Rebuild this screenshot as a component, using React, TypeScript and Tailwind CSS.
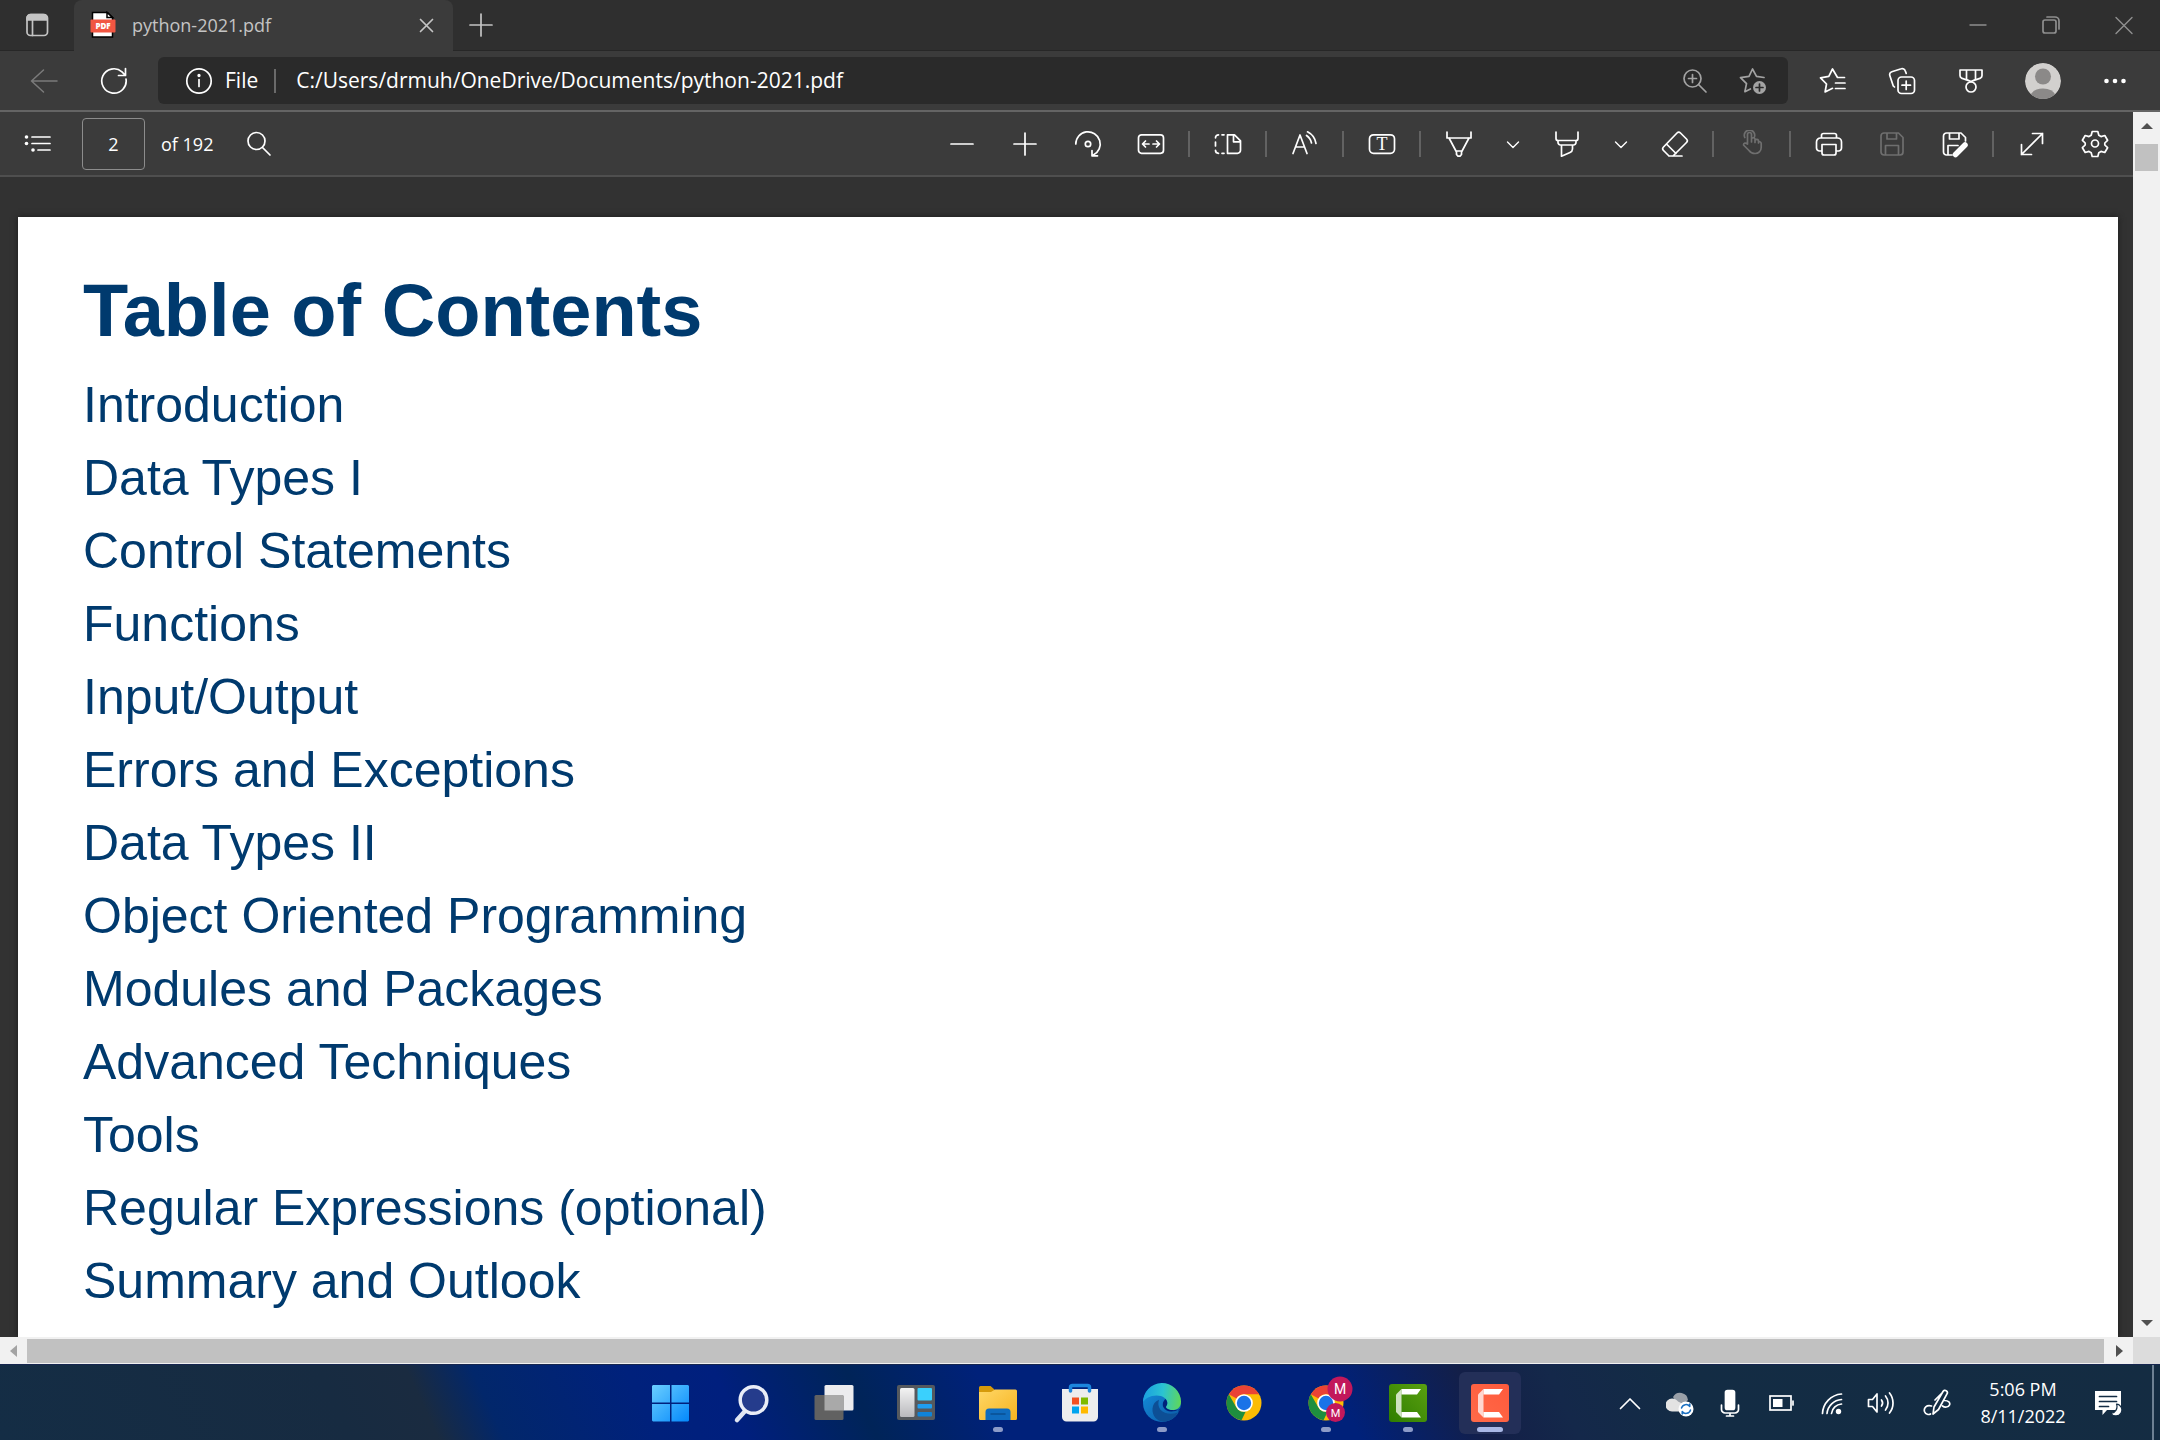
import clsx from "clsx";
import React from "react";

type IconProps = { children: React.ReactNode; className?: string };

// Line icons, all drawn on the same 28px grid
function Icon({ children, className }: IconProps) {
   return (
      <svg
         viewBox="0 0 28 28"
         fill="none"
         stroke="currentColor"
         strokeWidth={1.7}
         strokeLinecap="round"
         strokeLinejoin="round"
         aria-hidden="true"
         className={clsx("size-7 shrink-0", className)}
      >
         {children}
      </svg>
   );
}

// Coloured app logos on a 40px grid
function Logo({ children }: { children: React.ReactNode }) {
   return (
      <svg viewBox="0 0 40 40" aria-hidden="true" className="size-10 shrink-0 overflow-visible">
         {children}
      </svg>
   );
}

type ButtonProps = { label: string; className?: string; disabled?: boolean; children: React.ReactNode };

function IconButton({ label, className, disabled, children }: ButtonProps) {
   return (
      <button
         type="button"
         aria-label={label}
         disabled={disabled}
         className={clsx("flex h-12 shrink-0 items-center justify-center", className)}
      >
         {children}
      </button>
   );
}

/* ---------- Title bar ---------- */

function TitleBar() {
   return (
      <header className="flex h-[51px] shrink-0 items-stretch bg-[#2f2f2f] text-[#c4c4c4]">
         <div className="flex w-[74px] items-center justify-center border-b border-[#272727]">
            <IconButton label="Tab actions menu">
               <Icon>
                  <path d="M4 7.5a4 4 0 0 1 4-4h12a4 4 0 0 1 4 4V9H4z" fill="currentColor" />
                  <rect x="4" y="3.5" width="20.5" height="21" rx="3.5" />
                  <path d="M9.5 9v15.5" />
               </Icon>
            </IconButton>
         </div>
         <div className="flex w-[379px] items-center rounded-t-lg bg-[#3b3b3b] pr-2.5 pb-px pl-4">
            <svg viewBox="0 0 26 28" aria-hidden="true" className="h-7 w-[26px]">
               <path d="M2.5 1.5h15l5 5v19.5h-20z" fill="#fff" stroke="#000" strokeWidth="1.5" />
               <path d="M17 1.5v5h5.5z" fill="#fff" stroke="#000" strokeWidth="1.5" />
               <rect x="0.5" y="8.5" width="25" height="13" rx="1" fill="#f15642" />
               <text x="13" y="18" textAnchor="middle" fontSize="8" fontWeight="800" fill="#fff" fontFamily="Open Sans, sans-serif">
                  PDF
               </text>
            </svg>
            <span className="ml-4 flex-1 truncate text-lg">python-2021.pdf</span>
            <IconButton label="Close tab" className="w-8">
               <Icon>
                  <path d="M7.5 8.5l12 12M19.5 8.5l-12 12" />
               </Icon>
            </IconButton>
         </div>
         <div className="flex flex-1 items-center border-b border-[#272727]">
            <IconButton label="New tab" className="w-14">
               <Icon>
                  <path d="M14 3v22M3 14h22" />
               </Icon>
            </IconButton>
            <div className="ml-auto flex text-[#8f8f8f]">
               <IconButton label="Minimize" className="w-[72px]">
                  <Icon>
                     <path d="M6 14h16" strokeWidth={1.4} />
                  </Icon>
               </IconButton>
               <IconButton label="Restore" className="w-[74px]">
                  <Icon>
                     <rect x="6" y="9" width="13" height="13" rx="2" />
                     <path d="M10 6h8a4 4 0 0 1 4 4v8" />
                  </Icon>
               </IconButton>
               <IconButton label="Close" className="w-[72px]">
                  <Icon>
                     <path d="M6 6.5l16 16M22 6.5l-16 16" strokeWidth={1.4} />
                  </Icon>
               </IconButton>
            </div>
         </div>
      </header>
   );
}

/* ---------- Address bar ---------- */

function AddressBar() {
   return (
      <div className="flex h-[61px] shrink-0 items-center border-b-2 border-[#646464] bg-[#3b3b3b] text-white">
         <div className="flex w-[158px] items-center pl-[9px]">
            <IconButton label="Back" className="w-[70px] text-[#7b7b7b]" disabled>
               <Icon>
                  <path d="M27 14H1.5M13.5 3L1.5 14l12 11" strokeWidth={1.5} />
               </Icon>
            </IconButton>
            <IconButton label="Refresh" className="w-[70px]">
               <Icon>
                  <path d="M26 12A12.200 12.200 0 1 1 22 4.800l3 3.200M25.500 1.500V8.500h-7" />
               </Icon>
            </IconButton>
         </div>
         <div className="flex h-[47px] flex-1 items-center rounded-md bg-[#2a2a2a] pr-1.5 pl-[27px]">
            <Icon>
               <circle cx="14" cy="14" r="12.2" />
               <path d="M14 12.500v7" />
               <circle cx="14" cy="8.500" r="0.8" fill="currentColor" />
            </Icon>
            <span className="ml-3 text-[21px]">File</span>
            <span className="ml-4 h-6 w-0.5 bg-[#6a6a6a]" />
            <input
               aria-label="Address"
               defaultValue="C:/Users/drmuh/OneDrive/Documents/python-2021.pdf"
               className="ml-5 flex-1 bg-transparent text-[21px] outline-none"
            />
            <IconButton label="Zoom" className="w-[58px] text-[#a3a3a3]">
               <Icon>
                  <circle cx="11.5" cy="11.5" r="8.5" />
                  <path d="M17.5 17.5l7.5 7.5M11.5 7.5v8M7.5 11.5h8" />
               </Icon>
            </IconButton>
            <IconButton label="Add to favorites" className="w-[58px] text-[#a3a3a3]">
               <Icon>
                  <path d="M25 10.5l-7.500-1.200L13.500 2 10 9.300l-8.500 1.400 6 6-1.600 8 5.500-2.700" />
                  <circle cx="20.5" cy="20.5" r="6.5" fill="currentColor" stroke="none" />
                  <path d="M20.5 17v7M17 20.5h7" stroke="#2a2a2a" />
               </Icon>
            </IconButton>
         </div>
         <div className="flex items-center pr-2.5 pl-2.5">
            <IconButton label="Favorites" className="w-[69px]">
               <Icon>
                  <path d="M25.5 10.5h-7L13.500 2 9.800 9.400l-8.300 1.400 6 6.200-1.400 8 7.400-3.700M16.500 16h9.500M16.500 21.500h9.500" />
               </Icon>
            </IconButton>
            <IconButton label="Collections" className="w-[69px]">
               <Icon>
                  <rect x="10" y="10" width="16.5" height="16.5" rx="3.5" />
                  <path d="M18.200 14v8.500M14 18.200h8.500M6.500 20l-1.300-1.200L1.800 8.500a3 3 0 0 1 2-3.800l9.500-2.900a3 3 0 0 1 3.900 2l1 2.600" />
               </Icon>
            </IconButton>
            <IconButton label="Microsoft Rewards" className="w-[70px]">
               <Icon>
                  <path d="M3 3h22v5.500a3 3 0 0 1-1.500 2.600L14 14.500l-9.500-3.400A3 3 0 0 1 3 8.500zM9.500 3v9.500L14 14.500l4.500-2V3" />
                  <circle cx="14" cy="20" r="5" />
               </Icon>
            </IconButton>
            <IconButton label="Profile" className="w-[74px]">
               <svg viewBox="0 0 36 36" aria-hidden="true" className="size-9 rounded-full">
                  <circle cx="18" cy="18" r="18" fill="#d2d0ce" />
                  <circle cx="18" cy="13.5" r="8" fill="#8b8988" />
                  <path d="M5 32.500a14 11 0 0 1 26 0L26 36H10z" fill="#8b8988" />
               </svg>
            </IconButton>
            <IconButton label="Settings and more" className="w-[70px]">
               <Icon>
                  <g fill="currentColor" stroke="none">
                     <circle cx="5.5" cy="14" r="2.3" />
                     <circle cx="14" cy="14" r="2.3" />
                     <circle cx="22.5" cy="14" r="2.3" />
                  </g>
               </Icon>
            </IconButton>
         </div>
      </div>
   );
}

/* ---------- PDF toolbar ---------- */

type Tool = { label: string; icon?: React.ReactNode; kind?: "divider" | "menu"; disabled?: boolean };

const divider: Tool = { label: "", kind: "divider" };

const floppy = <path d="M22 25H6a3 3 0 0 1-3-3V6a3 3 0 0 1 3-3h14.500L25 7.500V22a3 3 0 0 1-3 3zM9 3v6h9.500V3M7.500 25V15.500h13V25" />;

const tools: Tool[] = [
   { label: "Zoom out", icon: <path d="M3 14h22" /> },
   { label: "Zoom in", icon: <path d="M14 3v22M3 14h22" /> },
   {
      label: "Rotate",
      icon: (
         <>
            <path d="M1.800 14a12.200 12.200 0 1 1 17.500 11M18 20.500v5.300h5.500" />
            <circle cx="14" cy="14" r="2.7" />
         </>
      ),
   },
   {
      label: "Fit to width",
      icon: (
         <>
            <rect x="1.5" y="4.8" width="25" height="18.5" rx="3" />
            <path d="M12 14H6M8.500 11L5.500 14l3 3M16 14h6M19.500 11l3 3-3 3" />
         </>
      ),
   },
   divider,
   {
      label: "Page view",
      icon: (
         <path d="M13.500 4.800h7l6 6v9.500a3 3 0 0 1-3 3h-10zM19.500 4.800v7h7M10 4.800H8M4.500 4.800a3 3 0 0 0-3 3M1.500 12v4M1.500 20.300a3 3 0 0 0 3 3M8 23.300h2" />
      ),
   },
   divider,
   { label: "Read aloud", icon: <path d="M2 23.500L9 5l7 18.500M4.500 17h9M15.500 5.500a12 12 0 0 1 5 7.500M16.500 1.800A16 16 0 0 1 25 13.500" /> },
   divider,
   {
      label: "Add text",
      icon: (
         <>
            <rect x="1.5" y="4.8" width="25" height="18.5" rx="4" />
            <text x="14" y="20" textAnchor="middle" fontSize="18" fill="currentColor" stroke="none" fontFamily="Liberation Serif, serif">
               T
            </text>
         </>
      ),
   },
   divider,
   { label: "Draw", icon: <path d="M2 2v6h24V2M4 8l7.500 14M24 8l-7.500 14M11.500 21h5v3.500l-1.500 1.700h-2l-1.500-1.700z" /> },
   { label: "Draw options", kind: "menu" },
   { label: "Highlight", icon: <path d="M3 2v6.500a2 2 0 0 0 2 2h18a2 2 0 0 0 2-2V2M5 10.500v1.800A2.500 2.500 0 0 0 7.500 15h13a2.500 2.500 0 0 0 2.500-2.700v-1.800M8.500 15v11.200l8.500-3.700a4 4 0 0 0 2.500-3.500V15" /> },
   { label: "Highlight options", kind: "menu" },
   { label: "Erase", icon: <path d="M8 26L2.500 20.500a2.500 2.500 0 0 1 0-3.500L16 3a2.500 2.500 0 0 1 3.500 0l6 6a2.500 2.500 0 0 1 0 3.500L12 26M8 26h13M5.500 14l9.500 9.500" /> },
   divider,
   {
      label: "Touch",
      disabled: true,
      icon: (
         <path d="M9.500 14V4.500a2 2 0 0 1 4 0v7.500M13.500 12V8.800a2 2 0 0 1 3.500 0V12.500M17 10.500a2 2 0 0 1 3.500 0v2.500M20.500 12a1.800 1.800 0 0 1 2.700 1.500v4a6 6 0 0 1-6.200 6c-3 0-4.500-.8-6-3l-5.500-5.500c0-2 2-2.500 4-1M6.800 7.500a5.200 5.200 0 1 1 9.400 0" />
      ),
   },
   divider,
   { label: "Print", icon: <path d="M7 21H4.500a3 3 0 0 1-3-3v-6a4 4 0 0 1 4-4h17a4 4 0 0 1 4 4v6a3 3 0 0 1-3 3H21M6.500 8V5.500a2 2 0 0 1 2-2h11a2 2 0 0 1 2 2V8M7 14.500h14V23a2 2 0 0 1-2 2H9a2 2 0 0 1-2-2z" /> },
   { label: "Save", disabled: true, icon: floppy },
   {
      label: "Save as",
      icon: (
         <>
            <path d="M11 25H5.500A3 3 0 0 1 2.500 22V6a3 3 0 0 1 3-3H20l4.500 4.500V11M8.500 3v6H18V3M7 25V15.500h10" />
            <path d="M14.500 24.500L24 15" strokeWidth="5.5" />
         </>
      ),
   },
   divider,
   { label: "Full screen", icon: <path d="M3.500 24.500l21-21M14.500 3.500h10v10M3.500 14.500v10h10" strokeLinejoin="miter" /> },
   {
      label: "PDF settings",
      icon: (
         <>
            <circle cx="14" cy="13.5" r="3.5" />
            <path d="M11.200 1.500h5.600l1 3.800 2.200 1.300 3.800-1.100 2.800 4.800-2.800 2.700v2l2.800 2.700-2.800 4.800-3.800-1.100-2.200 1.300-1 3.800h-5.600l-1-3.800L8 21.400l-3.800 1.100-2.800-4.800L4.200 15v-2l-2.800-2.700 2.800-4.800L8 6.600l2.200-1.300z" />
         </>
      ),
   },
];

function PdfToolbar() {
   return (
      <div className="flex h-[65px] shrink-0 items-center border-b-2 border-[#4f4f4f] bg-[#3b3b3b] pr-[7px] text-lg text-white">
         <IconButton label="Contents" className="w-[82px] pr-1.5">
            <Icon>
               <path d="M8 7h18M8 13.500h18M14 20h12" />
               <g fill="currentColor" stroke="none">
                  <circle cx="2.5" cy="7" r="1.8" />
                  <circle cx="2.5" cy="13.5" r="1.8" />
                  <circle cx="9" cy="20" r="1.8" />
               </g>
            </Icon>
         </IconButton>
         <input
            aria-label="Page number"
            defaultValue="2"
            className="h-[52px] w-[63px] rounded-sm border border-[#8c8c8c] bg-transparent text-center outline-none"
         />
         <span className="ml-4">of 192</span>
         <IconButton label="Find" className="ml-4 w-[60px]">
            <Icon>
               <circle cx="11.5" cy="11" r="8.5" />
               <path d="M17.500 17.500l7.500 7.500" />
            </Icon>
         </IconButton>
         <div role="toolbar" aria-label="PDF tools" className="ml-auto flex items-center">
            {tools.map((tool, i) =>
               tool.kind === "divider" ? (
                  <span key={i} className="mx-1.5 h-[26px] w-0.5 bg-[#626262]" />
               ) : tool.kind === "menu" ? (
                  <IconButton key={i} label={tool.label} className="w-[45px]">
                     <Icon>
                        <path d="M8.500 12l5.500 5.500 5.500-5.500" strokeWidth={1.4} />
                     </Icon>
                  </IconButton>
               ) : (
                  <IconButton
                     key={i}
                     label={tool.label}
                     disabled={tool.disabled}
                     className={clsx("w-[63px]", tool.disabled && "text-[#6f6f6f]")}
                  >
                     <Icon>{tool.icon}</Icon>
                  </IconButton>
               )
            )}
         </div>
      </div>
   );
}

/* ---------- Document ---------- */

const chapters = [
   "Introduction",
   "Data Types I",
   "Control Statements",
   "Functions",
   "Input/Output",
   "Errors and Exceptions",
   "Data Types II",
   "Object Oriented Programming",
   "Modules and Packages",
   "Advanced Techniques",
   "Tools",
   "Regular Expressions (optional)",
   "Summary and Outlook",
];

function DocumentPage() {
   return (
      <main className="min-h-0 flex-1 overflow-hidden bg-[#323232] px-[18px] pt-10 pr-[15px]">
         <article className="h-full bg-white px-[65px] pt-14 font-['Liberation_Sans',Arial,sans-serif] text-[#003a6e] shadow-[0_0_6px_#1c1c1c]">
            <h1 className="text-[74px] leading-[76px] font-bold">Table of Contents</h1>
            <ol className="mt-5 text-[50px] leading-[73px]">
               {chapters.map((chapter) => (
                  <li key={chapter}>
                     <a href="#">{chapter}</a>
                  </li>
               ))}
            </ol>
         </article>
      </main>
   );
}

function VerticalScrollbar() {
   return (
      <div className="flex w-[27px] shrink-0 flex-col items-center bg-[#f1f1f1]">
         <svg viewBox="0 0 12 6" aria-hidden="true" className="mt-[11px] h-1.5 w-3">
            <path d="M0 6l6-6 6 6z" fill="#505050" />
         </svg>
         <div className="mt-[15px] h-[27px] w-[23px] bg-[#c1c1c1]" />
         <svg viewBox="0 0 12 6" aria-hidden="true" className="mt-auto mb-[11px] h-1.5 w-3">
            <path d="M0 0l6 6 6-6z" fill="#505050" />
         </svg>
      </div>
   );
}

function HorizontalScrollbar() {
   return (
      <div className="flex h-[27px] shrink-0">
         <div className="flex flex-1 items-center bg-[#f1f1f1]">
            <svg viewBox="0 0 7 12" aria-hidden="true" className="mx-2.5 h-3 w-[7px]">
               <path d="M7 0v12L0 6z" fill="#a3a3a3" />
            </svg>
            <div className="h-6 flex-1 bg-[#c1c1c1]" />
            <svg viewBox="0 0 7 12" aria-hidden="true" className="mr-2.5 ml-3 h-3 w-[7px]">
               <path d="M0 0v12l7-6z" fill="#505050" />
            </svg>
         </div>
         <div className="w-[27px] bg-[#dcdcdc]" />
      </div>
   );
}

/* ---------- Taskbar ---------- */

function ChromeShapes() {
   return (
      <>
         <circle cx="20" cy="20" r="17.5" fill="#fbbc04" />
         <path d="M4.800 11.300A17.500 17.500 0 0 1 35.200 11.300H20a8.700 8.700 0 0 0-7.500 4.300z" fill="#ea4335" />
         <path d="M4.800 11.300L12.400 24.500a8.700 8.700 0 0 0 9.300 4L17.500 37.300A17.500 17.500 0 0 1 4.800 11.300z" fill="#1e8e3e" />
         <circle cx="20" cy="20" r="8.8" fill="#fff" />
         <circle cx="20" cy="20" r="7.2" fill="#1a73e8" />
      </>
   );
}

function Camtasia({ from, to }: { from: string; to: string }) {
   const id = `camtasia-${from.slice(1)}`;
   return (
      <>
         <linearGradient id={id} x1="1" y1="0" x2="0" y2="1">
            <stop stopColor={from} />
            <stop offset="1" stopColor={to} />
         </linearGradient>
         <rect x="1" y="1" width="38" height="38" rx="3" fill={`url(#${id})`} />
         <path d="M13.500 6H33l-4 5.500H13.500zM13.500 29H29l4 5.500H13.500z" fill="#fff" />
         <path d="M8 11.500L13.500 6v28.500L8 29z" fill="#fff" fillOpacity="0.75" />
      </>
   );
}

type App = { name: string; logo: React.ReactNode; running?: boolean; active?: boolean };

const apps: App[] = [
   {
      name: "Start",
      logo: (
         <>
            <linearGradient id="start" x1="0" y1="0" x2="40" y2="40" gradientUnits="userSpaceOnUse">
               <stop stopColor="#70d2ff" />
               <stop offset="1" stopColor="#0086fc" />
            </linearGradient>
            <path d="M3 2h17v17.500H2V3zM21.500 2H38l1 1v16.500H21.500zM2 21h18v17.500H3l-1-1zM21.500 21H39v16.500l-1 1H21.500z" fill="url(#start)" />
         </>
      ),
   },
   {
      name: "Search",
      logo: (
         <>
            <path d="M14 27l-9 10" stroke="#dfe5f2" strokeWidth="4.5" strokeLinecap="round" />
            <circle cx="21.5" cy="17" r="13.3" fill="#253c8c" stroke="#e9edf7" strokeWidth="3.5" />
         </>
      ),
   },
   {
      name: "Task View",
      logo: (
         <>
            <rect x="10.5" y="2" width="29" height="25.5" rx="1.5" fill="#ececee" />
            <rect x="0.5" y="12" width="29" height="25" rx="1.5" fill="#616161" />
            <path d="M10.500 12h18a1 1 0 0 1 1 1v14.500h-19z" fill="#a9a9a9" />
         </>
      ),
   },
   {
      name: "Widgets",
      logo: (
         <>
            <linearGradient id="widgets" x1="0" y1="0" x2="0" y2="1">
               <stop stopColor="#f3f3f3" />
               <stop offset="1" stopColor="#b9b9bd" />
            </linearGradient>
            <rect x="1" y="2" width="38" height="35" rx="2" fill="#55595e" />
            <rect x="4" y="5" width="14.5" height="29" rx="1.5" fill="url(#widgets)" />
            <rect x="21.5" y="5" width="14.5" height="12.5" rx="1" fill="#3ad0fd" />
            <rect x="21.5" y="21" width="14.5" height="4.5" rx="1" fill="#1e9df0" />
            <rect x="21.5" y="29" width="14.5" height="4.5" rx="1" fill="#0f83d8" />
         </>
      ),
   },
   {
      name: "File Explorer",
      running: true,
      logo: (
         <>
            <linearGradient id="folder" x1="0" y1="0" x2="1" y2="1">
               <stop stopColor="#ffd766" />
               <stop offset="1" stopColor="#f6b31f" />
            </linearGradient>
            <path d="M1 4.500A1.500 1.500 0 0 1 2.500 3h10l4 3.500V12H1z" fill="#d69a0a" />
            <path d="M1 9h12l4-2.500h20.500A1.500 1.500 0 0 1 39 8v27.500a1.500 1.500 0 0 1-1.500 1.500h-35A1.500 1.500 0 0 1 1 35.500z" fill="url(#folder)" />
            <path d="M7.500 37V29a3.500 3.500 0 0 1 3.500-3.500h18a3.500 3.500 0 0 1 3.500 3.500v8z" fill="#0f6cbf" />
            <path d="M13 31h14" stroke="#0a4f92" strokeWidth="1.5" strokeLinecap="round" />
         </>
      ),
   },
   {
      name: "Microsoft Store",
      logo: (
         <>
            <path d="M2 6h36v28a4.500 4.500 0 0 1-4.500 4.500h-27A4.500 4.500 0 0 1 2 34z" fill="#ededee" />
            <path d="M10.500 8V4.500a2 2 0 0 1 2-2h15a2 2 0 0 1 2 2V8" fill="none" stroke="#1c86dd" strokeWidth="3.5" strokeLinecap="round" />
            <path d="M12 14.500h7v7h-7z" fill="#f25022" />
            <path d="M21 14.500h7v7h-7z" fill="#7fba00" />
            <path d="M12 23.500h7v7h-7z" fill="#00a4ef" />
            <path d="M21 23.500h7v7h-7z" fill="#ffb900" />
         </>
      ),
   },
   {
      name: "Microsoft Edge",
      running: true,
      logo: (
         <>
            <linearGradient id="edge-top" x1="0" y1="0.5" x2="1" y2="0.6">
               <stop stopColor="#1a9fe0" />
               <stop offset="0.5" stopColor="#2bc3d2" />
               <stop offset="1" stopColor="#5fd75a" />
            </linearGradient>
            <linearGradient id="edge-low" x1="0" y1="0" x2="1" y2="1">
               <stop stopColor="#1490df" />
               <stop offset="1" stopColor="#0c59a4" />
            </linearGradient>
            <circle cx="20" cy="20" r="19" fill="url(#edge-low)" />
            <path d="M36 29.500a19 19 0 0 1-13 9.300c-8 0-13-6-12.500-13 .3-4 2.500-7.500 6.500-9 -1 3-1 7 1.500 10 4 4.500 11 5 17.500 2.700z" fill="#0d4f95" />
            <path d="M1 19.500A19 19 0 0 1 39 18.500c.2 6-4 8.500-8.500 8.500-4 0-6.500-1.500-6.500-3 0-1 1.300-1.800 1.300-4C25.300 16 21 12.500 14.500 12.500 8 12.500 3 15.500 1 19.500z" fill="url(#edge-top)" />
            <path d="M24 24c0-1 1.300-1.800 1.300-4 0-1.500-.6-2.900-1.700-4.100-2.600 1.700-3.600 5.600-2 8.600 2.600 4.600 9.400 5.200 15.400 1.800l-1 3.200 2.500-4C33.500 28.500 24 27 24 24z" fill="#00217c" />
         </>
      ),
   },
   { name: "Google Chrome", logo: <ChromeShapes /> },
   {
      name: "Google Chrome (M)",
      running: true,
      logo: (
         <>
            <ChromeShapes />
            <circle cx="34" cy="6" r="12.5" fill="#c2185b" />
            <circle cx="29.5" cy="29.5" r="9.5" fill="#c2185b" />
            <g fill="#fff" textAnchor="middle" fontFamily="Roboto, sans-serif">
               <text x="34" y="11" fontSize="14">
                  M
               </text>
               <text x="29.5" y="33.5" fontSize="11">
                  M
               </text>
            </g>
         </>
      ),
   },
   { name: "Camtasia", running: true, logo: <Camtasia from="#5aa010" to="#2e7d00" /> },
   { name: "Camtasia Recorder", active: true, logo: <Camtasia from="#ff5a3c" to="#ff6a48" /> },
];

function TaskbarApp({ name, logo, running, active }: App) {
   return (
      <li className="flex w-[82px] justify-center">
         <button
            type="button"
            aria-label={name}
            className={clsx(
               "flex h-[62px] w-[62px] flex-col items-center justify-between rounded-md pt-[11px] pb-0.5",
               active && "bg-[#232f58]"
            )}
         >
            <Logo>{logo}</Logo>
            {active && <span className="h-[5px] w-[26px] rounded-full bg-[#a9b8e6]" />}
            {running && <span className="h-[5px] w-2.5 rounded-full bg-[#8c9bc8]" />}
         </button>
      </li>
   );
}

function Tray() {
   return (
      <div className="flex h-full flex-1 items-center justify-end text-white">
         <IconButton label="Show hidden icons" className="w-[50px]">
            <Icon>
               <path d="M4.500 19.500L14 10l9.500 9.500" />
            </Icon>
         </IconButton>
         <IconButton label="OneDrive" className="w-[50px]">
            <Icon>
               <g stroke="none">
                  <path d="M7 8a8 8 0 0 1 15 3l-8 8z" fill="#9aa0a8" />
                  <path d="M6 22.500a6.500 6.500 0 0 1 0-13c3 0 5 1.500 6 3l8 4v6z" fill="#e3e3e3" />
                  <circle cx="20" cy="20" r="7.5" fill="#fff" />
               </g>
               <path d="M15.500 19a4.700 4.700 0 0 1 8.300-1.500V15M24.500 21a4.700 4.700 0 0 1-8.300 1.500V25" stroke="#1b6fc0" strokeWidth="1.5" />
            </Icon>
         </IconButton>
         <IconButton label="Microphone" className="w-[50px]">
            <Icon>
               <rect x="9.5" y="1.5" width="9" height="19" rx="2" fill="currentColor" />
               <path d="M5.500 16v4.500a3.500 3.500 0 0 0 3.500 3.500h10a3.500 3.500 0 0 0 3.500-3.500V16M14 24v3M10.500 27h7" />
            </Icon>
         </IconButton>
         <IconButton label="Battery" className="w-[53px]">
            <Icon>
               <rect x="2" y="7" width="21" height="14" strokeLinejoin="miter" />
               <path d="M5 10h9.500v8H5z" fill="currentColor" stroke="none" />
               <path d="M25 12v4" />
            </Icon>
         </IconButton>
         <IconButton label="Network" className="w-12">
            <Icon>
               <path d="M4.500 24.500A20.500 20.500 0 0 1 23.500 5M9 24.500A15.500 15.500 0 0 1 23.500 10.500M13.500 24.500a11 11 0 0 1 10-9.500" />
               <circle cx="20.5" cy="22.5" r="2.7" fill="currentColor" stroke="none" />
            </Icon>
         </IconButton>
         <IconButton label="Volume" className="w-[50px]">
            <Icon>
               <path d="M1.500 10.500h4L10 5v18l-4.500-5.500h-4zM14.500 11a5 5 0 0 1 0 6M18.500 7a11 11 0 0 1 0 14M22.500 4a16 16 0 0 1 0 20" />
            </Icon>
         </IconButton>
         <IconButton label="Pen menu" className="w-[62px]">
            <Icon>
               <path d="M10 25l1-7 9-15.500a2.300 2.300 0 0 1 4 2.300L15.500 20.500zM19 4l-7 7M8.500 17c-5-1.500-8 2-7 5.500 1 3 4.500 3.500 6 2.500M21.500 11.500c4 0 6 2 5 4.500s-5 2.500-7 1" />
            </Icon>
         </IconButton>
         <button type="button" className="w-[110px] text-center text-lg leading-[27px]">
            <time dateTime="2022-08-11T17:06">
               5:06 PM
               <br />
               8/11/2022
            </time>
         </button>
         <IconButton label="Notifications" className="w-[60px]">
            <Icon>
               <path d="M1 2h26v19H13l-4.500 5V21H1z" fill="currentColor" stroke="none" />
               <path d="M5.500 7.500h17M5.500 12.500h17M5.500 17.500h9" stroke="#132c44" />
               <path d="M22.500 15a7 7 0 0 1-5.500 9.500 6 6 0 1 0 5.500-9.500z" fill="currentColor" stroke="#132c44" strokeWidth="1.2" />
            </Icon>
         </IconButton>
         <div className="ml-3.5 h-full w-2 border-l-2 border-[#6d8093]" />
      </div>
   );
}

function Taskbar() {
   return (
      <footer className="flex h-[76px] shrink-0 items-center border-t border-[#16264f] bg-[linear-gradient(65deg,#142d45_0%,#172b41_16%,#1a2b40_20%,#02276b_23%,#00217c_30%,#001f7e_34%,#002458_40%,#00217a_46%,#00217a_62%,#131f48_68%,#14284a_72%,#132c44_78%,#142c42_100%)]">
         <div className="flex-1" />
         <ul className="flex">
            {apps.map((app) => (
               <TaskbarApp key={app.name} {...app} />
            ))}
         </ul>
         <Tray />
      </footer>
   );
}

export default function App() {
   return (
      <div className="flex h-screen flex-col overflow-hidden bg-[#3b3b3b] font-['Open_Sans','Noto_Sans',sans-serif]">
         <TitleBar />
         <AddressBar />
         <div className="flex min-h-0 flex-1">
            <div className="flex min-w-0 flex-1 flex-col">
               <PdfToolbar />
               <DocumentPage />
            </div>
            <VerticalScrollbar />
         </div>
         <HorizontalScrollbar />
         <Taskbar />
      </div>
   );
}
